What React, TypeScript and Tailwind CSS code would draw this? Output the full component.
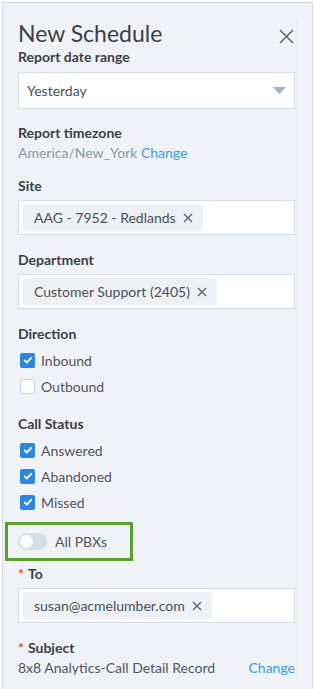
const FONT = "font-['Lato','Open_Sans',sans-serif]";

function CloseIcon() {
  return (
    <svg width="15" height="15" viewBox="0 0 15 15" className="shrink-0">
      <path d="M1 1 L14 14 M14 1 L1 14" stroke="#5b6470" strokeWidth="1.5" fill="none" />
    </svg>
  );
}

function TagX() {
  return (
    <svg width="10" height="10" viewBox="0 0 10 10" className="shrink-0">
      <path d="M1 1 L9 9 M9 1 L1 9" stroke="#5a6068" strokeWidth="1.3" fill="none" />
    </svg>
  );
}

function Label({ children, required }: { children: string; required?: boolean }) {
  return (
    <p className="h-5 text-[14px] leading-5 font-bold text-[#3a4048]">
      {required && <span className="mr-1 text-[#e5484d]">*</span>}
      {children}
    </p>
  );
}

function TagInput({ value }: { value: string }) {
  return (
    <div className="mt-1 flex h-[35px] items-center border border-[#d4dce6] bg-white pl-[4px]">
      <span className="flex h-[27px] items-center gap-[7px] rounded-[3px] bg-[#edf0f4] pl-[11px] pr-[10px] text-[14px] text-[#4a5058]">
        {value}
        <TagX />
      </span>
    </div>
  );
}

function Check({ label, checked }: { label: string; checked: boolean }) {
  return (
    <label className="flex h-[26px] items-center gap-[6px] pl-[2px] text-[14px] text-[#4f555d]">
      {checked ? (
        <span className="flex size-[15px] items-center justify-center rounded-[2px] bg-[#2c88de]">
          <svg width="10" height="8" viewBox="0 0 10 8">
            <path d="M1.2 4 L3.8 6.4 L8.8 1.4" stroke="white" strokeWidth="1.8" fill="none" />
          </svg>
        </span>
      ) : (
        <span className="size-[15px] rounded-[2px] border border-[#c9d2dd] bg-white" />
      )}
      {label}
    </label>
  );
}

export default function App() {
  return (
    <div className={`h-[689px] w-[314px] overflow-hidden bg-white pl-[2px] pr-[1px] pt-[2px] ${FONT}`}>
      <div className="h-[700px] border border-[#d3dae4] bg-[#eff2f7] pl-[15px] pt-[17px]">
        <div className="w-[279px] border-r border-[#e6e9ee] pr-px">
          <header className="flex h-[27px] items-center justify-between">
            <h2 className="text-[23px] leading-[27px] text-[#3a4047]">New Schedule</h2>
            <span className="mr-[1px] mt-[5px]">
              <CloseIcon />
            </span>
          </header>

          <Label>Report date range</Label>
          <div className="mt-[5px] flex h-[37px] items-center justify-between border border-[#d4dce6] bg-white pl-[8px] pr-[8px] text-[14px] text-[#4a5058]">
            Yesterday
            <svg width="13" height="7" viewBox="0 0 13 7">
              <path d="M0 0 H13 L6.5 7 Z" fill="#9fb1c4" />
            </svg>
          </div>

          <div className="mt-[14px]">
            <Label>Report timezone</Label>
            <p className="h-5 text-[14px] leading-5 text-[#8b98a7]">
              America/New_York <span className="text-[#3b9aea]">Change</span>
            </p>
          </div>

          <div className="mt-[13px]">
            <Label>Site</Label>
            <TagInput value="AAG - 7952 - Redlands" />
          </div>

          <div className="mt-[15px]">
            <Label>Department</Label>
            <TagInput value="Customer Support (2405)" />
          </div>

          <div className="mt-[15px]">
            <Label>Direction</Label>
            <div className="mt-[3px]">
              <Check label="Inbound" checked />
              <Check label="Outbound" checked={false} />
            </div>
          </div>

          <div className="mt-[15px]">
            <Label>Call Status</Label>
            <div className="mt-[3px]">
              <Check label="Answered" checked />
              <Check label="Abandoned" checked />
              <Check label="Missed" checked />
            </div>
          </div>

          <div className="ml-[-13px] mt-[7px] flex h-[39px] w-[128px] items-center gap-[8px] border-[3px] border-[#5a9e2b] pl-[10px]">
            <span className="flex h-[17px] w-[29px] items-center rounded-full bg-[#d5dde7] pl-[2px]">
              <span className="size-[13px] rounded-full bg-white" />
            </span>
            <span className="text-[14px] text-[#4f555d]">All PBXs</span>
          </div>

          <div className="mt-[3px]">
            <Label required>To</Label>
            <TagInput value="susan@acmelumber.com" />
          </div>

          <div className="mt-[15px]">
            <Label required>Subject</Label>
            <p className="flex h-5 items-center justify-between text-[14px] leading-5 text-[#4f555d]">
              8x8 Analytics-Call Detail Record
              <span className="text-[#3b9aea]">Change</span>
            </p>
          </div>
        </div>
      </div>
    </div>
  );
}
